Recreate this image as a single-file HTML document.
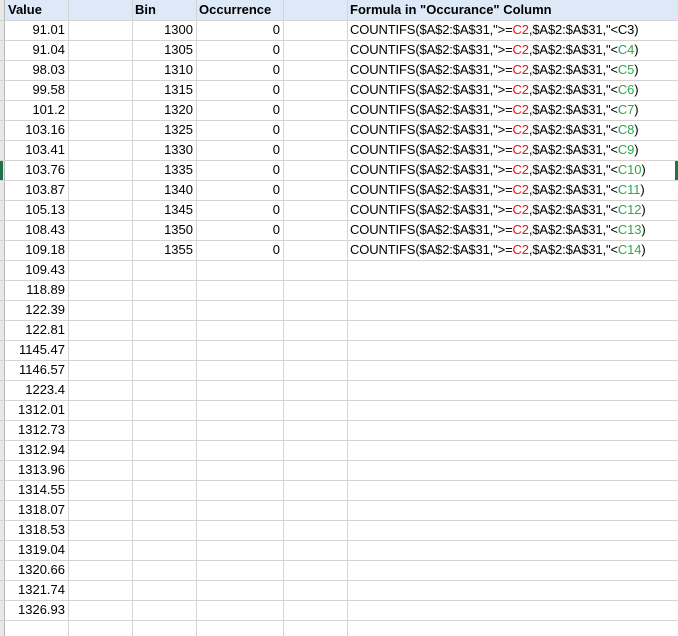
<!DOCTYPE html>
<html><head><meta charset="utf-8"><style>
body{margin:0;width:678px;height:636px;overflow:hidden;background:#fff;font-family:"Liberation Sans",sans-serif;font-size:13px;color:#000;position:relative}
.hdr{position:absolute;left:0;top:0;width:678px;height:20px;background:#dde9f6}
.vl{position:absolute;top:0;width:1px;height:636px;background:#d4d4d4}
.hl{position:absolute;left:0;width:678px;height:1px;background:#d4d4d4}
.t{position:absolute;height:20px;line-height:20px;white-space:nowrap}
.r{text-align:right}
.b{font-weight:bold}
.f{letter-spacing:-0.14px}
.red{color:#e8141a}.grn{color:#2aa84a}
.ls{position:absolute;left:0;top:0;width:4px;height:636px;background:#e8e8e8;border-right:1px solid #b8b8b8}
</style></head><body>
<div class="hdr"></div>
<div class="ls"></div>
<div class="vl" style="left:68px"></div>
<div class="vl" style="left:132px"></div>
<div class="vl" style="left:196px"></div>
<div class="vl" style="left:283px"></div>
<div class="vl" style="left:347px"></div>
<div style="position:absolute;left:675px;top:160px;width:3px;height:20px;background:#217346"></div>
<div style="position:absolute;left:0;top:160px;width:3px;height:20px;background:#217346"></div>
<div class="t b" style="left:8px;top:0">Value</div>
<div class="t b" style="left:135px;top:0">Bin</div>
<div class="t b" style="left:199px;top:0">Occurrence</div>
<div class="t b" style="left:350px;top:0">Formula in "Occurance" Column</div>
<div id="g"></div>
<script>
var vals=["91.01","91.04","98.03","99.58","101.2","103.16","103.41","103.76","103.87","105.13","108.43","109.18","109.43","118.89","122.39","122.81","1145.47","1146.57","1223.4","1312.01","1312.73","1312.94","1313.96","1314.55","1318.07","1318.53","1319.04","1320.66","1321.74","1326.93"];
var h="";
for(var i=1;i<=31;i++)h+='<div class="hl" style="top:'+(20*i)+'px"></div>';
for(var i=0;i<vals.length;i++){var y=20+20*i;
h+='<div class="t r" style="left:0;width:65px;top:'+y+'px">'+vals[i]+'</div>';
if(i<12){h+='<div class="t r" style="left:132px;width:61px;top:'+y+'px">'+(1300+5*i)+'</div>';
h+='<div class="t r" style="left:196px;width:84px;top:'+y+'px">0</div>';
var c="C"+(i+3);var cc=i==0?c:'<span class="grn">'+c+'</span>';
h+='<div class="t f" style="left:350px;top:'+y+'px">COUNTIFS($A$2:$A$31,"&gt;=<span class="red">C2</span>,$A$2:$A$31,"&lt;'+cc+')</div>';}}
document.getElementById("g").innerHTML=h;
</script>
</body></html>
